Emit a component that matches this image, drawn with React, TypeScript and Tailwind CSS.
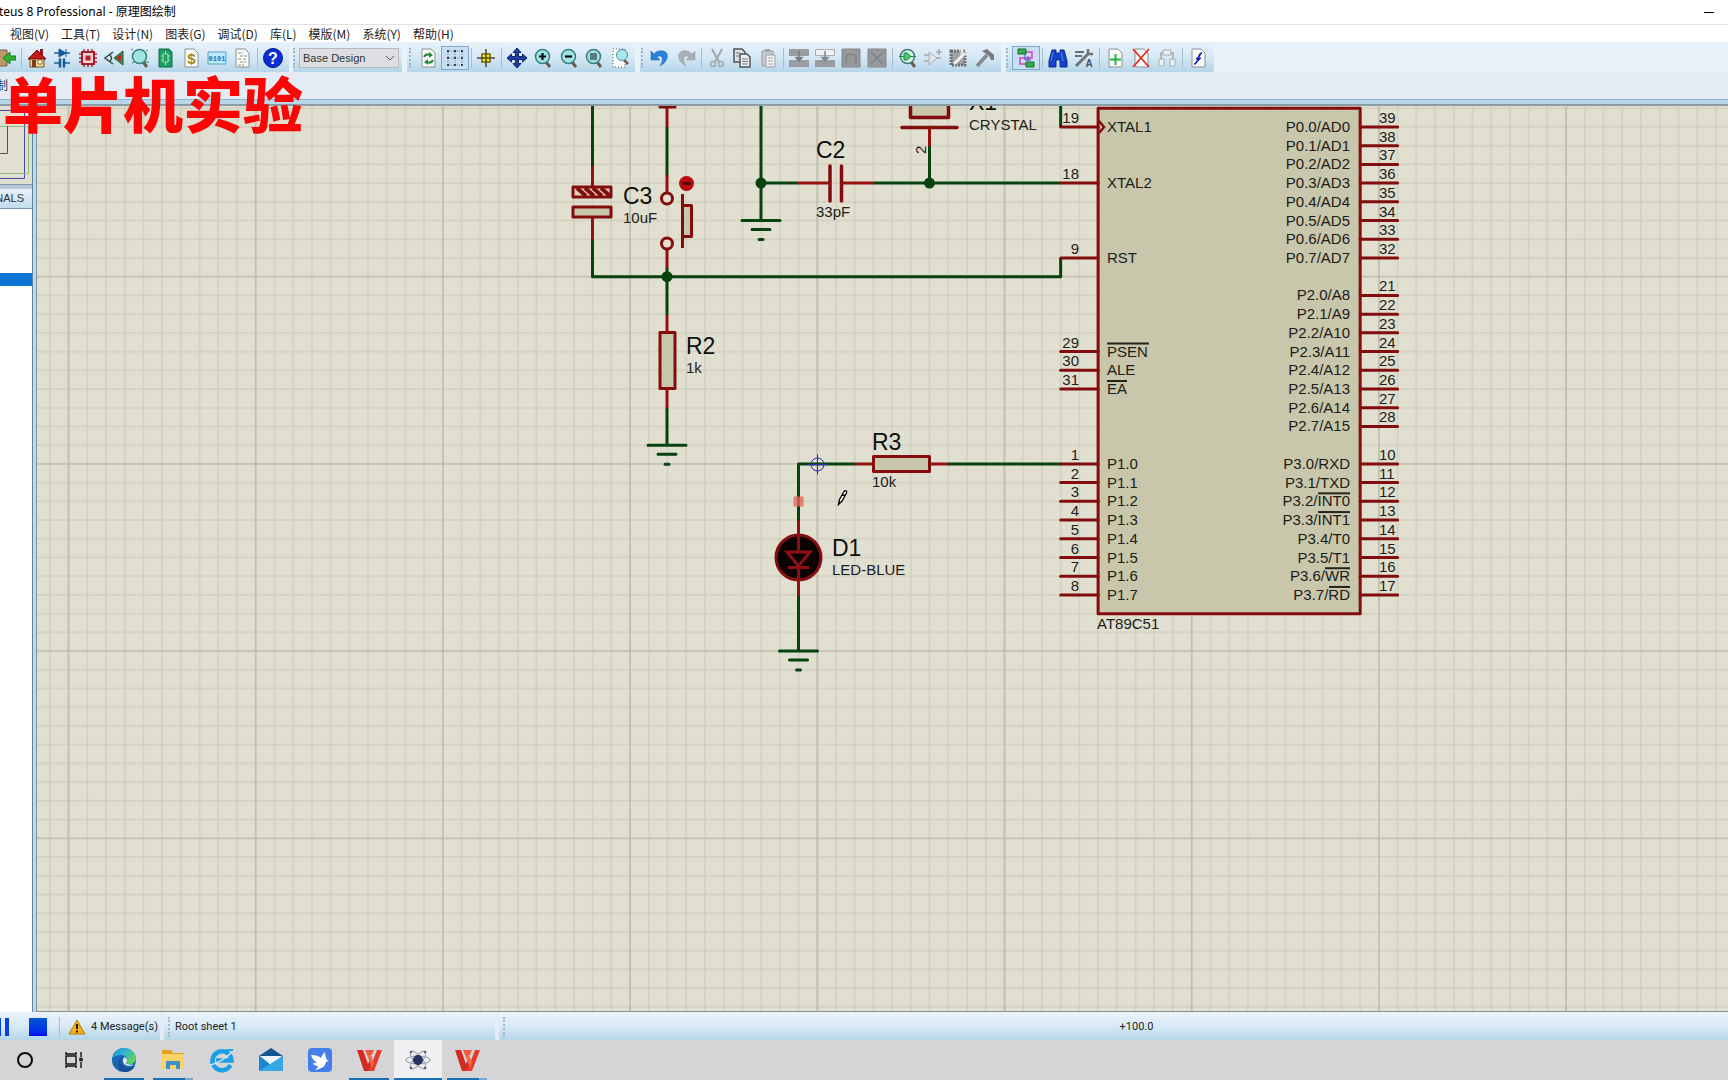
import React from "react";

/* ---------- schematic geometry ---------- */
const PITCH = 18.72;
const gx = (k: number) => 68.5 + PITCH * k;
const gy = (j: number) => 276.7 + PITCH * j;

const RED = "#830c0c";
const GREEN = "#08420f";
const BODY = "#c8c6ab";

type Pin = { row: number; num: string; name: string; bar?: number };

const LEFT_PINS: Pin[] = [
  { row: -8, num: "19", name: "XTAL1" },
  { row: -5, num: "18", name: "XTAL2" },
  { row: -1, num: "9", name: "RST" },
  { row: 4, num: "29", name: "PSEN", bar: 42 },
  { row: 5, num: "30", name: "ALE" },
  { row: 6, num: "31", name: "EA", bar: 20 },
  ...[0, 1, 2, 3, 4, 5, 6, 7].map((n) => ({ row: 10 + n, num: String(n + 1), name: `P1.${n}` })),
];

const RIGHT_PINS: Pin[] = [
  ...[0, 1, 2, 3, 4, 5, 6, 7].map((n) => ({ row: n - 8, num: String(39 - n), name: `P0.${n}/AD${n}` })),
  ...[0, 1, 2, 3, 4, 5, 6, 7].map((n) => ({ row: n + 1, num: String(21 + n), name: `P2.${n}/A${8 + n}` })),
  { row: 10, num: "10", name: "P3.0/RXD" },
  { row: 11, num: "11", name: "P3.1/TXD" },
  { row: 12, num: "12", name: "P3.2/INT0", bar: 32 },
  { row: 13, num: "13", name: "P3.3/INT1", bar: 32 },
  { row: 14, num: "14", name: "P3.4/T0" },
  { row: 15, num: "15", name: "P3.5/T1" },
  { row: 16, num: "16", name: "P3.6/WR", bar: 25 },
  { row: 17, num: "17", name: "P3.7/RD", bar: 21 },
];

function Ground({ x, y }: { x: number; y: number }) {
  return (
    <path
      d={`M${x - 19} ${y}h38M${x - 9} ${y + 9}h18M${x - 2} ${y + 19}h4`}
      stroke={GREEN}
      strokeWidth="3"
      strokeLinecap="round"
    />
  );
}

function Schematic() {
  return (
    <svg className="block h-full w-full" role="img" aria-label="AT89C51 schematic" fill="none">
      <defs>
        <pattern id="minor" width={PITCH} height={PITCH} patternUnits="userSpaceOnUse" x={gx(0) - 1} y={gy(0) - 1}>
          <path d={`M1 0V${PITCH}M0 1H${PITCH}`} stroke="#c9c8b8" strokeWidth="1" />
        </pattern>
        <pattern id="major" width={PITCH * 10} height={PITCH * 10} patternUnits="userSpaceOnUse" x={gx(0) - 1} y={gy(0) - 1}>
          <path d={`M1 0V${PITCH * 10}M0 1H${PITCH * 10}`} stroke="#b7b6a8" strokeWidth="1.2" />
        </pattern>
      </defs>
      <g transform="translate(-37,-106)">
        <rect x="0" y="0" width="4000" height="3000" fill="url(#minor)" />
        <rect x="0" y="0" width="4000" height="3000" fill="url(#major)" />

        {/* wires */}
        <g stroke={GREEN} strokeWidth="3" strokeLinejoin="round">
          <path d={`M592.5 100V166M592.5 240V${gy(0)}H${gx(53)}V${gy(-1)}`} />
          <path d={`M667 127V175M667 268V315M667 408V${gy(9)}`} />
          <path d={`M761 100V${gy(-3)}M761 ${gy(-5)}H797M874 ${gy(-5)}H${gx(53)}M929.5 146V${gy(-5)}`} />
          <path d={`M${gx(53)} 100V${gy(-8)}`} />
          <path d={`M${gx(53)} ${gy(10)}H948M855 ${gy(10)}H798.5V520M798.5 596V${gy(20)}`} />
        </g>
        <g fill={GREEN}>
          <circle cx="667" cy={gy(0)} r="5.5" />
          <circle cx="761" cy={gy(-5)} r="5.5" />
          <circle cx="929.5" cy={gy(-5)} r="5.5" />
        </g>
        <Ground x={761} y={gy(-3)} />
        <Ground x={667} y={gy(9)} />
        <Ground x={798.5} y={gy(20)} />

        {/* component leads */}
        <g stroke="#961010" strokeWidth="3">
          <path d="M592.5 166V187M592.5 218V240" />
          <path d="M667 108V127M667 175V192M667 250V268" />
          <path d="M667 315V332M667 389V408" />
          <path d={`M797 ${gy(-5)}H830M841 ${gy(-5)}H874M929.5 127V146`} />
          <path d={`M855 ${gy(10)}H873M930 ${gy(10)}H948`} />
        </g>

        {/* C3 */}
        <g stroke={RED} strokeWidth="3" strokeLinejoin="round">
          <rect x="573" y="187" width="38" height="10" fill="#ded0b8" />
          <path d="M577 188l9 8M585 188l9 8M593 188l9 8M601 188l9 8" strokeWidth="4" />
          <rect x="573" y="207" width="38" height="10" fill={BODY} />
        </g>

        {/* push button */}
        <g stroke={RED} strokeWidth="3" strokeLinejoin="round">
          <rect x="660" y="95" width="15" height="12" fill={BODY} />
          <circle cx="667" cy="198.5" r="5.5" fill="#e0dfd0" />
          <circle cx="667" cy="243.5" r="5.5" fill="#e0dfd0" />
          <rect x="682.5" y="205.5" width="9" height="31" fill={BODY} />
          <path d="M682.5 194V248" />
        </g>
        <circle cx="686.5" cy="183.5" r="7.5" fill="#bd0a10" />
        <path d="M682 183.5h9" stroke="#5d0508" strokeWidth="3" />

        {/* C2 and crystal */}
        <g stroke={RED} strokeWidth="3.5" strokeLinejoin="round" strokeLinecap="round">
          <path d="M830 166V201M841.5 166V201M902 127.5H957" />
          <rect x="910.5" y="95" width="38" height="22.5" fill={BODY} />
        </g>

        {/* resistors */}
        <g stroke={RED} strokeWidth="3" strokeLinejoin="round">
          <rect x="660" y="332.5" width="15" height="56" fill={BODY} />
          <rect x="873.5" y="456.5" width="56" height="15" fill={BODY} />
        </g>

        {/* LED */}
        <circle cx="798.5" cy="557.5" r="22.5" fill="#0a0203" stroke="#850e10" strokeWidth="3" />
        <path
          d="M798.5 520V552M798.5 567V596M787 552h23l-11.5 14zM788 567.5h21"
          stroke="#8f1013"
          strokeWidth="3"
        />
        <rect x="793.5" y="496.5" width="10" height="10" fill="#e2675a" fillOpacity=".8" />

        {/* origin marker */}
        <g stroke="#2c2cb8" strokeWidth="1">
          <circle cx="817.5" cy="464.5" r="6.5" />
          <path d="M817.5 454.5v20M807.5 464.5h20" />
        </g>

        {/* pencil pointer */}
        <path
          d="M838.5 504.5l1-5 4.5-8c1-1.5 3.5-.5 2.5 1.5l-4.5 8zM842 494l3 1.5"
          fill="#fff"
          stroke="#000"
          strokeWidth="1.3"
        />

        {/* microcontroller */}
        <rect
          x={gx(55)}
          y={gy(-9)}
          width={PITCH * 14}
          height={PITCH * 27}
          fill={BODY}
          stroke={RED}
          strokeWidth="3"
          strokeLinejoin="round"
        />
        <path d={`M1099 ${gy(-8) - 6}l5 6l-5 6`} stroke={RED} strokeWidth="2.5" />
        <g stroke={RED} strokeWidth="3">
          {LEFT_PINS.map((p) => (
            <path key={p.num} d={`M${gx(53)} ${gy(p.row)}H${gx(55)}`} strokeLinecap="round" />
          ))}
          {RIGHT_PINS.map((p) => (
            <path key={p.num} d={`M${gx(69)} ${gy(p.row)}H${gx(71)}`} strokeLinecap="round" />
          ))}
        </g>
        <g stroke="#23231c" strokeWidth="2">
          {LEFT_PINS.filter((p) => p.bar).map((p) => (
            <path key={p.num} d={`M1107 ${gy(p.row) - 8}h${p.bar}`} />
          ))}
          {RIGHT_PINS.filter((p) => p.bar).map((p) => (
            <path key={p.num} d={`M1350 ${gy(p.row) - 8}h-${p.bar}`} />
          ))}
        </g>

        <g fill="#1c1c18" fontFamily="Liberation Sans, Arial, sans-serif" fontSize="15">
          {LEFT_PINS.map((p) => (
            <React.Fragment key={p.num}>
              <text x="1107" y={gy(p.row) + 5}>{p.name}</text>
              <text x="1079" y={gy(p.row) - 4} textAnchor="end">{p.num}</text>
            </React.Fragment>
          ))}
          {RIGHT_PINS.map((p) => (
            <React.Fragment key={p.num}>
              <text x="1350" y={gy(p.row) + 5} textAnchor="end">{p.name}</text>
              <text x="1379" y={gy(p.row) - 4}>{p.num}</text>
            </React.Fragment>
          ))}
          <text x="1097" y="629">AT89C51</text>
          <text x="623" y="223">10uF</text>
          <text x="686" y="373">1k</text>
          <text x="816" y="217">33pF</text>
          <text x="969" y="130">CRYSTAL</text>
          <text x="872" y="487">10k</text>
          <text x="832" y="575">LED-BLUE</text>
          <text transform="translate(926,154) rotate(-90)">2</text>
        </g>
        <g fill="#0e0e0c" fontFamily="Liberation Sans, Arial, sans-serif" fontSize="23">
          <text x="623" y="204">C3</text>
          <text x="686" y="354">R2</text>
          <text x="816" y="158">C2</text>
          <text x="969" y="110">X1</text>
          <text x="872" y="450">R3</text>
          <text x="832" y="556">D1</text>
        </g>
      </g>
    </svg>
  );
}

/* ---------- toolbar icons, 20x20 ---------- */
function Magnifier({ children, fill = "#9fe3e0" }: { children?: React.ReactNode; fill?: string }) {
  return (
    <>
      <path d="M13 14l4 5" stroke="#6b5a4a" strokeWidth="3" />
      <circle cx="9.5" cy="8.5" r="7" fill={fill} stroke="#3a7d83" strokeWidth="1.5" />
      {children}
    </>
  );
}

const page = <path d="M4 1h9l4 4v14H4z" fill="#fafbf6" stroke="#8b9096" />;

const ICONS: Record<string, React.ReactNode> = {
  exit: (
    <>
      <path d="M3 2h8v16H3z" fill="#b9986b" stroke="#7b6340" />
      <path d="M20 8v4h-6v4l-7-6 7-6v4z" fill="#2fb32f" stroke="#1b7c1f" />
    </>
  ),
  home: (
    <>
      <path d="M13 1h3v6h-3z" fill="#8d1414" />
      <path d="M3 10h14v9H3z" fill="#f4dc9a" stroke="#6d5326" />
      <path d="M1 11l9-9 9 9z" fill="#c51818" stroke="#6e0f0f" />
      <path d="M5 12h4v7H5z" fill="#7d3a16" />
      <path d="M11 12h4v4h-4z" fill="#fff" stroke="#8d6b2b" />
    </>
  ),
  parts: (
    <>
      <path d="M2 5h16M2 15h5M13 15h5" stroke="#24618c" strokeWidth="1.5" />
      <path d="M7 1l7 4-7 4zM14 1v8" fill="#175b96" stroke="#175b96" />
      <path d="M8 10.5v9M12 10.5v9" stroke="#175b96" strokeWidth="2.5" />
    </>
  ),
  chip: (
    <>
      <path d="M6 1v18M10 1v18M14 1v18M1 6h18M1 10h18M1 14h18" stroke="#b02a36" strokeWidth="1.5" />
      <path d="M4 4h12v12H4z" fill="#f3d4d6" stroke="#a81b28" strokeWidth="2" />
      <path d="M7.5 7.5h5v5h-5z" fill="#c01a29" />
    </>
  ),
  eye: (
    <>
      <path d="M9 4L1 10l8 6M6 7q3 3 0 6" stroke="#3c4750" strokeWidth="1.5" />
      <path d="M10 10l9-7v14z" fill="#2c9a48" stroke="#1d5e30" />
      <path d="M12 10l5-4v8z" fill="#bf2430" />
    </>
  ),
  scope: (
    <Magnifier>
      <path d="M3 2l-2-1M2 15l2-1M15 14h4M16 3l2-1" stroke="#2e8d50" />
    </Magnifier>
  ),
  greenDoc: (
    <>
      <path d="M4 1h10l3 3v15H4z" fill="#1f9d62" stroke="#146a43" />
      <path d="M8 6h5v8H8zM10.5 3v3M10.5 14v3M6 8h2M6 12h2M13 8h2M13 12h2" stroke="#9be8c2" />
    </>
  ),
  dollar: (
    <>
      {page}
      <text x="10.5" y="16" textAnchor="middle" fontSize="15" fontWeight="bold" fontFamily="Liberation Sans, sans-serif" fill="#a88a13">$</text>
    </>
  ),
  bits: (
    <>
      <path d="M1 4h18v12H1z" fill="#bfeafb" stroke="#5d9fc1" />
      <text x="10" y="13" textAnchor="middle" fontSize="7" fontWeight="bold" fontFamily="Liberation Mono, monospace" fill="#156fb8">0101</text>
    </>
  ),
  report: (
    <>
      {page}
      <path d="M6 5h5M8 8h7M6 11h4M11 11h4M8 14h6M6 17h6" stroke="#8a8e92" strokeDasharray="3 1" />
    </>
  ),
  help: (
    <>
      <circle cx="10" cy="10" r="9.5" fill="#0b2fd6" stroke="#06128a" />
      <text x="10" y="15.5" textAnchor="middle" fontSize="16" fontWeight="bold" fontFamily="Liberation Sans, sans-serif" fill="#fff">?</text>
    </>
  ),
  refresh: (
    <>
      {page}
      <path d="M6 9q2-4 6-2M15 12q-2 4-6 2" stroke="#2a8a3a" strokeWidth="2" />
      <path d="M11 4l4 3-4 3zM10 11l-4 3 4 3z" fill="#2a8a3a" />
    </>
  ),
  grid: (
    <>
      <path d="M2 3h16M2 10h16M2 17h16M3 2v16M10 2v16M17 2v16" stroke="#6c7f96" strokeDasharray="1 1" />
      <g fill="#33475c">
        {[3, 10, 17].map((x) => [3, 10, 17].map((y) => <rect key={`${x}-${y}`} x={x - 1} y={y - 1} width="2" height="2" />))}
      </g>
    </>
  ),
  origin: (
    <>
      <path d="M6 6h8v8H6z" fill="#ffe81a" stroke="#6c6410" strokeWidth="1.5" />
      <path d="M10 1v18M1 10h18" stroke="#4d4a1b" strokeWidth="1.5" />
    </>
  ),
  pan: (
    <path
      d="M10 0l4 4.5h-2.5v4h4V6L20 10l-4.5 4v-2.5h-4v4H14L10 20l-4-4.5h2.5v-4h-4V14L0 10l4.5-4v2.5h4v-4H6z"
      fill="#1b3f9e"
      stroke="#12246c"
    />
  ),
  zoomIn: (
    <Magnifier>
      <path d="M9.5 5v7M6 8.5h7" stroke="#0a0a0a" strokeWidth="2.2" />
    </Magnifier>
  ),
  zoomOut: (
    <Magnifier>
      <path d="M6 8.5h7" stroke="#0a0a0a" strokeWidth="2.2" />
    </Magnifier>
  ),
  zoomAll: (
    <Magnifier>
      <path d="M6 5h7v7H6z" fill="#5f7a7d" />
    </Magnifier>
  ),
  zoomArea: (
    <>
      <path d="M3 1h12v18H3z" fill="#fff" stroke="#555" strokeDasharray="1 2" />
      <path d="M14 12l4 4" stroke="#6b5a4a" strokeWidth="2.5" />
      <circle cx="12" cy="7" r="5.5" fill="#a6e8ec" stroke="#4a9198" />
    </>
  ),
  undo: <path d="M1 3v9h9L7 9c4-3 8 1 3 9 10-5 10-17-1-15-3 .5-4 2-5 3z" fill="#2b82d9" stroke="#1763b4" strokeWidth=".5" />,
  redo: <path d="M19 3v9h-9l3-3c-4-3-8 1-3 9C0 13 0 1 11 3c3 .5 4 2 5 3z" fill="#a9afb4" stroke="#989ea3" strokeWidth=".5" />,
  cut: (
    <>
      <path d="M5 1l7 13M15 1L8 14" stroke="#a2a8ac" strokeWidth="2" />
      <circle cx="6" cy="16" r="2.5" stroke="#a2a8ac" strokeWidth="1.5" />
      <circle cx="14" cy="16" r="2.5" stroke="#a2a8ac" strokeWidth="1.5" />
    </>
  ),
  copy: (
    <>
      <path d="M2 1h8l3 3v10H2z" fill="#dfe3e6" stroke="#4b555e" strokeWidth="1.5" />
      <path d="M8 6h7l3 3v10H8z" fill="#eef0f2" stroke="#4b555e" strokeWidth="1.5" />
      <path d="M10 11h6M10 13.5h6M10 16h6M4 5h4M4 8h3" stroke="#6c757d" />
    </>
  ),
  paste: (
    <>
      <path d="M4 3h11v15H4z" fill="#c5c9cc" stroke="#9aa0a4" />
      <path d="M7 1h5v3H7z" fill="#a0a5a9" />
      <path d="M8 7h9v12H8z" fill="#eff1f2" stroke="#9aa0a4" />
      <path d="M10 10h5M10 13h5M10 16h5" stroke="#a5aaae" />
    </>
  ),
  blockCopy: (
    <>
      <path d="M0 1h20v7H0zM0 12h20v7H0z" fill="#999da0" />
      <path d="M10 3v8M7 9.5l3 3.5 3-3.5z" stroke="#777b7e" strokeWidth="1.5" fill="#777b7e" />
    </>
  ),
  blockMove: (
    <>
      <path d="M.5 1.5h19v6H.5z" fill="#eef2f5" stroke="#a9aeb2" />
      <path d="M0 12h20v7H0z" fill="#999da0" />
      <path d="M10 3v8M7 9.5l3 3.5 3-3.5z" stroke="#84888b" strokeWidth="1.5" fill="#84888b" />
    </>
  ),
  blockRotate: (
    <>
      <path d="M1 1h18v18H1z" fill="#97999c" stroke="#85888b" />
      <path d="M6 15c-3-5 0-9 4-9s7 4 4 9" stroke="#85888b" strokeWidth="2" />
    </>
  ),
  blockDelete: (
    <>
      <path d="M1 1h18v18H1z" fill="#97999c" stroke="#85888b" />
      <path d="M4 4l12 12M16 4L4 16" stroke="#808386" strokeWidth="1.5" />
    </>
  ),
  pick: (
    <Magnifier fill="#d5f3e3">
      <path d="M1 8.5h5M6 5h3l4 3.5L9 12H6zM13 8.5h5" fill="#49c470" stroke="#1f8d45" />
    </Magnifier>
  ),
  make: (
    <>
      <path d="M1 7h5M1 13h5M13 10h5" stroke="#a4a9ad" strokeWidth="1.5" />
      <path d="M6 4l8 6-8 7z" fill="#e3e6e8" stroke="#a8adb1" />
      <path d="M13 4h6M16 1v6" stroke="#a4a9ad" strokeWidth="1.5" />
    </>
  ),
  pack: (
    <>
      <path d="M2 3h14v14H2z" fill="#a0a3a5" stroke="#6e7173" strokeWidth="3" strokeDasharray="2 1" />
      <path d="M5 16l10-10" stroke="#f0f1f2" strokeWidth="3" />
      <path d="M13 1v5h6" stroke="#e3e5e6" strokeWidth="3" />
    </>
  ),
  hammer: (
    <>
      <path d="M12 7L2 18" stroke="#86898c" strokeWidth="3.5" />
      <path d="M7 3l5-2 7 6v5h-3l-2-4-4-3z" fill="#77797c" />
    </>
  ),
  wire: (
    <>
      <path d="M9 4h7v6H4v6h6" stroke="#d43fb8" strokeWidth="1.5" />
      <path d="M9 6v6h6M12 8v5" stroke="#4a4fc4" />
      <path d="M2 1h8v5H2zM10 14h8v5h-8z" fill="#2fb24d" stroke="#176a2b" />
    </>
  ),
  find: (
    <>
      <path d="M4 2h4v3h4V2h4l3 11v6h-7v-7H8v7H1v-6z" fill="#1442c8" stroke="#0d2b8a" />
      <path d="M5 4l-2 9M13 4l2 9" stroke="#5b8bf0" />
    </>
  ),
  tools: (
    <>
      <path d="M1 4h9M1 8h7" stroke="#6b6f73" strokeWidth="2" />
      <path d="M2 18L15 5" stroke="#707477" strokeWidth="3" />
      <path d="M14 1v5h5" stroke="#707477" strokeWidth="2.5" />
      <text x="15" y="19" textAnchor="middle" fontSize="10" fontWeight="bold" fontFamily="Liberation Sans, sans-serif" fill="#4c5053">A</text>
    </>
  ),
  newSheet: (
    <>
      {page}
      <path d="M10.5 6v11M5 11.5h11" stroke="#27b13b" strokeWidth="2" />
    </>
  ),
  delSheet: (
    <>
      {page}
      <path d="M2 1l16 18M18 1L2 19" stroke="#dc2323" strokeWidth="1.6" />
    </>
  ),
  tree: (
    <>
      <path d="M6 2h8v5H6zM2 11h5v7H2zM13 11h5v7h-5z" fill="#eef0f1" stroke="#a6abaf" />
      <path d="M4 11V5h2M14 5h2v6" stroke="#a0a5a9" strokeWidth="1.5" />
    </>
  ),
  elec: (
    <>
      {page}
      <path d="M14 5c-3 0-3 3-4 6s-2 5-4 5" stroke="#1622c4" strokeWidth="1.5" />
      <path d="M13 6l-5 5h3l-3 4 5-5h-3z" fill="#1622c4" stroke="#1622c4" />
    </>
  ),
};

const TITLES: Record<string, string> = {
  exit: "Close", home: "Home", parts: "Schematic", chip: "PCB Layout", eye: "3D Visualizer", scope: "Gerber Viewer",
  greenDoc: "Design Explorer", dollar: "Bill of Materials", bits: "Source Code", report: "Project Notes", help: "Help",
};

function Tool({ icon, active = false }: { icon: string; active?: boolean }) {
  return (
    <button
      type="button"
      aria-label={TITLES[icon] ?? icon}
      className={`flex h-6 min-w-0 flex-1 items-center justify-center ${active ? "border border-[#7fa8ca] bg-[#c9def0]" : ""}`}
    >
      <svg viewBox="0 0 20 20" className="h-5 w-5 shrink-0" fill="none">
        {ICONS[icon]}
      </svg>
    </button>
  );
}

function Group({ className, items, grip = true }: { className: string; items: string[]; grip?: boolean }) {
  return (
    <div className={`flex h-[30px] shrink-0 items-center bg-linear-to-b from-[#e8f2fa] via-[#d6e8f5] to-[#b5d6ea] pt-0.5 ${className}`}>
      {grip && <span className="mr-1 h-5 shrink-0 border-l-2 border-dotted border-[#a3b6c4]" />}
      {items.map((it, i) =>
        it === "|" ? (
          <span key={i} className="mx-0.5 h-5 w-px shrink-0 bg-[#a9bfce]" />
        ) : (
          <Tool key={i} icon={it.replace("*", "")} active={it.endsWith("*")} />
        ),
      )}
    </div>
  );
}

const MENUS = ["视图(V)", "工具(T)", "设计(N)", "图表(G)", "调试(D)", "库(L)", "模版(M)", "系统(Y)", "帮助(H)"];

/* ---------- taskbar icons, 26x26 ---------- */
const wps = (
  <>
    <path d="M1 3h6l5 14 2-5 3 3-4 9H8z" fill="#d42a22" />
    <path d="M9 3h9l-2 5h-5z" fill="#ee5a3d" />
    <path d="M26 3l-8 21h-5l8-21z" fill="#e43c28" />
    <path d="M11 8l4 0 3 8-2 5z" fill="#f06a48" />
  </>
);

const TASKS: { label: string; art: React.ReactNode; line?: "full" | "split"; active?: boolean }[] = [
  { label: "Cortana", art: <circle cx="12" cy="13" r="7" stroke="#0c0c0c" strokeWidth="2" /> },
  {
    label: "Task View",
    art: <path d="M4 9h10v8H4zM4 5v2h10V5M4 21v-2h10v2M19 5v5M19 15v6M18 11.5h2v2h-2z" stroke="#111" strokeWidth="1.4" />,
  },
  {
    label: "Edge",
    line: "full",
    art: (
      <>
        <defs>
          <linearGradient id="edge" x1="0" y1="0" x2="1" y2=".6">
            <stop offset="0" stopColor="#1d8fd8" />
            <stop offset=".5" stopColor="#2fb6cf" />
            <stop offset="1" stopColor="#62d353" />
          </linearGradient>
        </defs>
        <circle cx="13" cy="13" r="12" fill="#1668b4" />
        <path d="M1.5 11C3 4 8 1 13 1c7 0 12 5 12 10 0 4-3 6-6 6-3 0-4-1-3.5-2.500C17 12 15 8 10 8c-4 0-7 1.5-8.5 3z" fill="url(#edge)" />
        <path d="M11 10c-3 4 0 11 6 11 3 0 5-1 7-2-2 4-6 6-10 6C7 25 5 15 11 10z" fill="#1a4f96" />
        <path d="M13.5 10c-2 2-2.5 6 1 8 3 1.5 7 1 9-.5-3 .5-7 0-8-1-.5-1 1.5-3 0-5z" fill="#dbe8f1" />
      </>
    ),
  },
  {
    label: "File Explorer",
    line: "split",
    art: (
      <>
        <path d="M2 3h9l2 3h11v4H2z" fill="#e3a21a" />
        <path d="M2 7h22v15H2z" fill="#f8d368" />
        <path d="M6 22v-8h14v8h-4v-4h-6v4z" fill="#3f8fcb" />
      </>
    ),
  },
  {
    label: "IE",
    art: (
      <>
        <path d="M21.5 18a9.500 9.500 0 1 1 1-4.500H7" stroke="#1d9fe3" strokeWidth="4.5" />
        <path d="M2 17C3 9 12 2 24 3" stroke="#1d9fe3" strokeWidth="2" />
        <path d="M1 18C10 16 18 10 23 5" stroke="#d5e4ee" strokeWidth="1.6" />
      </>
    ),
  },
  {
    label: "Mail",
    art: (
      <>
        <path d="M1 9l12-8 12 8v3H1z" fill="#11558f" />
        <path d="M1 9h24v15H1z" fill="#1e86cf" />
        <path d="M2 9h22l-11 9z" fill="#eff6fb" />
        <path d="M1 24l24-15v15z" fill="#35a7e4" />
      </>
    ),
  },
  {
    label: "Xunlei",
    art: (
      <>
        <rect x="1" y="1" width="24" height="24" rx="4" fill="#467fe9" />
        <path d="M4 8c5 0 8 1 10 3 1-3 3-5 4-6 0 4 1 6 2 8l2 1-3 1c-1 5-5 7-11 8 2-2 3-3 3-4-3 0-5-2-5-3h4C7 14 5 11 4 8z" fill="#fff" />
      </>
    ),
  },
  { label: "WPS Office", line: "full", art: wps },
  {
    label: "Proteus",
    line: "full",
    active: true,
    art: (
      <>
        <g stroke="#a1a5ae" strokeWidth="1.1">
          <ellipse cx="13" cy="13" rx="12" ry="4" />
          <ellipse cx="13" cy="13" rx="11" ry="4" transform="rotate(50 13 13)" />
          <ellipse cx="13" cy="13" rx="11" ry="4" transform="rotate(-50 13 13)" />
        </g>
        <circle cx="13" cy="13" r="5" fill="#27325e" />
        <g fill="#54586a">
          <circle cx="6" cy="5" r="1.3" />
          <circle cx="20" cy="5" r="1.3" />
          <circle cx="6" cy="21" r="1.3" />
          <circle cx="20" cy="21" r="1.3" />
        </g>
      </>
    ),
  },
  { label: "WPS Writer", line: "split", art: wps },
];

export default function App() {
  return (
    <div className="flex h-screen flex-col overflow-hidden bg-white font-['Noto_Sans','Noto_Sans_CJK_SC',sans-serif] text-black">
      <header className="flex h-[25px] shrink-0 items-center justify-between border-b border-[#e2e2e2] text-xs">
        <h1 className="-ml-px whitespace-nowrap">teus 8 Professional - 原理图绘制</h1>
        <button type="button" aria-label="Minimize" className="mr-2 flex h-6 w-4 items-center justify-start">
          <span className="h-px w-2.5 bg-black" />
        </button>
      </header>

      <nav className="flex h-[17px] shrink-0 items-center gap-3 pl-2.5 font-['Noto_Sans_CJK_SC',sans-serif] text-xs text-[#222]">
        {MENUS.map((m) => (
          <button key={m} type="button" className="leading-4 whitespace-nowrap">
            {m}
          </button>
        ))}
      </nav>

      <div className="flex h-[30px] shrink-0 bg-[#e9f1f9]">
        <Group
          grip={false}
          className="-ml-[7px] w-[296px] pr-[3px]"
          items={["exit", "|", "home", "parts", "chip", "eye", "scope", "greenDoc", "dollar", "bits", "report", "|", "help"]}
        />
        <div className="ml-1 flex h-[30px] w-[109px] shrink-0 items-center bg-linear-to-b from-[#e8f2fa] via-[#d6e8f5] to-[#b5d6ea] pt-0.5 pr-[3px]">
          <span className="mr-1 h-5 border-l-2 border-dotted border-[#a3b6c4]" />
          <label className="relative flex min-w-0 flex-1 items-center">
            <select
              aria-label="Design variant"
              className="h-5 w-full appearance-none border border-[#b5b9bd] bg-[#dcdee1] pl-[3px] font-['Liberation_Sans',sans-serif] text-[11px] leading-4 text-[#333]"
            >
              <option>Base Design</option>
            </select>
            <svg viewBox="0 0 10 6" className="pointer-events-none absolute right-1 h-1.5 w-2.5" fill="none">
              <path d="M1 1l4 4 4-4" stroke="#555" />
            </svg>
          </label>
        </div>
        <Group className="ml-[5px] w-[228px] pr-0.5 pl-0.5" items={["refresh", "grid*", "|", "origin", "|", "pan", "zoomIn", "zoomOut", "zoomAll", "zoomArea"]} />
        <Group
          className="ml-[5px] w-[361px] pr-[3px] pl-px"
          items={["undo", "redo", "|", "cut", "copy", "paste", "|", "blockCopy", "blockMove", "blockRotate", "blockDelete", "|", "pick", "make", "pack", "hammer"]}
        />
        <Group
          className="ml-[5px] w-[208px] pr-[3px]"
          items={["wire*", "|", "find", "tools", "|", "newSheet", "delSheet", "tree", "|", "elec"]}
        />
      </div>

      <div className="relative flex h-[27px] shrink-0 items-center bg-[#e4ebf3]">
        <div className="flex h-full w-10 items-center justify-between pr-3 text-xs text-[#1b3a5c]">
          <span className="-ml-1">制</span>
          <svg viewBox="0 0 8 8" className="h-2.5 w-2.5" fill="none">
            <path d="M1 1l6 6M7 1L1 7" stroke="#555" />
          </svg>
        </div>
        <p className="absolute -top-0.5 left-[3px] z-10 font-['Noto_Sans_CJK_SC',sans-serif] text-[60px] leading-[64px] font-black whitespace-nowrap text-[#fb0505]">
          单片机实验
        </p>
      </div>
      <div className="h-[7px] shrink-0 border-t border-b-2 border-t-[#8fb5cf] border-b-[#8a9ca6] bg-[#b9d7e9]" />

      <main className="flex min-h-0 flex-1">
        <aside className="flex w-[33px] shrink-0 flex-col border-r border-[#5f86aa] bg-[#b8c8d8]">
          <div className="h-[79px] shrink-0 border-b border-[#7d99b3] bg-[#e0dfd0]">
            <svg className="block h-full w-full" fill="none">
              <path d="M0 4.5h24.5V72.5H0" stroke="#4a4aa8" />
              <path d="M0 20.5h28.5V67.5H0" stroke="#8fbb78" />
              <path d="M7.5 20V47.5H0" stroke="#55554a" />
            </svg>
          </div>
          <h2 className="mt-1 flex h-5 shrink-0 items-center justify-end border-b border-[#6f93b5] bg-linear-to-b from-[#e9f2f9] to-[#c3dcec] pr-2 font-['Liberation_Sans',sans-serif] text-[11px] text-[#333]">
            NALS
          </h2>
          <ul className="flex-1 bg-white pt-16">
            <li className="h-[13px] bg-[#0b74d6]" />
          </ul>
        </aside>
        <div className="w-1 shrink-0 border-r border-[#8193a2] bg-[#c4d6e4]" />
        <section className="min-w-0 flex-1 overflow-hidden border-b border-[#8a8f90] bg-[#e0dfd0]">
          <Schematic />
        </section>
      </main>

      <footer className="flex h-7 shrink-0 items-center bg-linear-to-b from-[#e9f3fb] via-[#d9eaf6] to-[#b3d6e8] pt-0.5 font-['Roboto',sans-serif] text-[11px] text-[#222]">
        <button type="button" aria-label="Pause" className="flex gap-1">
          <span className="h-[18px] w-px bg-[#0c3fe0]" />
          <span className="h-[18px] w-1 bg-[#0c3fe0]" />
        </button>
        <button type="button" aria-label="Stop" className="ml-5 h-[18px] w-[18px] bg-linear-to-b from-[#0a55cf] to-[#0505f0]" />
        <span className="ml-3 h-5 w-px bg-[#a9bfce]" />
        <button type="button" className="ml-2 flex w-[92px] items-center gap-[5px] whitespace-nowrap">
          <svg viewBox="0 0 18 16" className="h-4 w-[18px]" fill="none">
            <path d="M9 1l8 14H1z" fill="#f3b21b" stroke="#b57c10" strokeLinejoin="round" />
            <path d="M9 5v5M9 11.5v2" stroke="#1b1300" strokeWidth="2" />
          </svg>
          4 Message(s)
        </button>
        <span className="h-full w-1 bg-[#e2edf6]" />
        <span className="ml-1 h-5 border-l-2 border-dotted border-[#a3b6c4]" />
        <span className="ml-[5px] w-[320px] whitespace-nowrap">Root sheet 1</span>
        <span className="h-full w-1 bg-[#e2edf6]" />
        <span className="ml-1 h-5 border-l-2 border-dotted border-[#a3b6c4]" />
        <output className="flex-1 pl-10 text-center">+100.0</output>
      </footer>

      <div className="flex h-10 shrink-0 gap-px bg-[#d5d4d7] pl-0.5">
        {TASKS.map((t) => (
          <button
            key={t.label}
            type="button"
            aria-label={t.label}
            className={`flex w-12 flex-col items-center justify-between pt-[7px] ${t.active ? "bg-[#f0f0f2]" : ""}`}
          >
            <svg viewBox="0 0 26 26" className="h-[26px] w-[26px]" fill="none">
              {t.art}
            </svg>
            {t.line && (
              <span className={`flex h-0.5 ${t.active ? "w-full" : "w-10"}`}>
                <span className="flex-1 bg-[#1f6fb4]" />
                {t.line === "split" && <span className="w-2 bg-[#7ba6cb]" />}
              </span>
            )}
          </button>
        ))}
      </div>
    </div>
  );
}
